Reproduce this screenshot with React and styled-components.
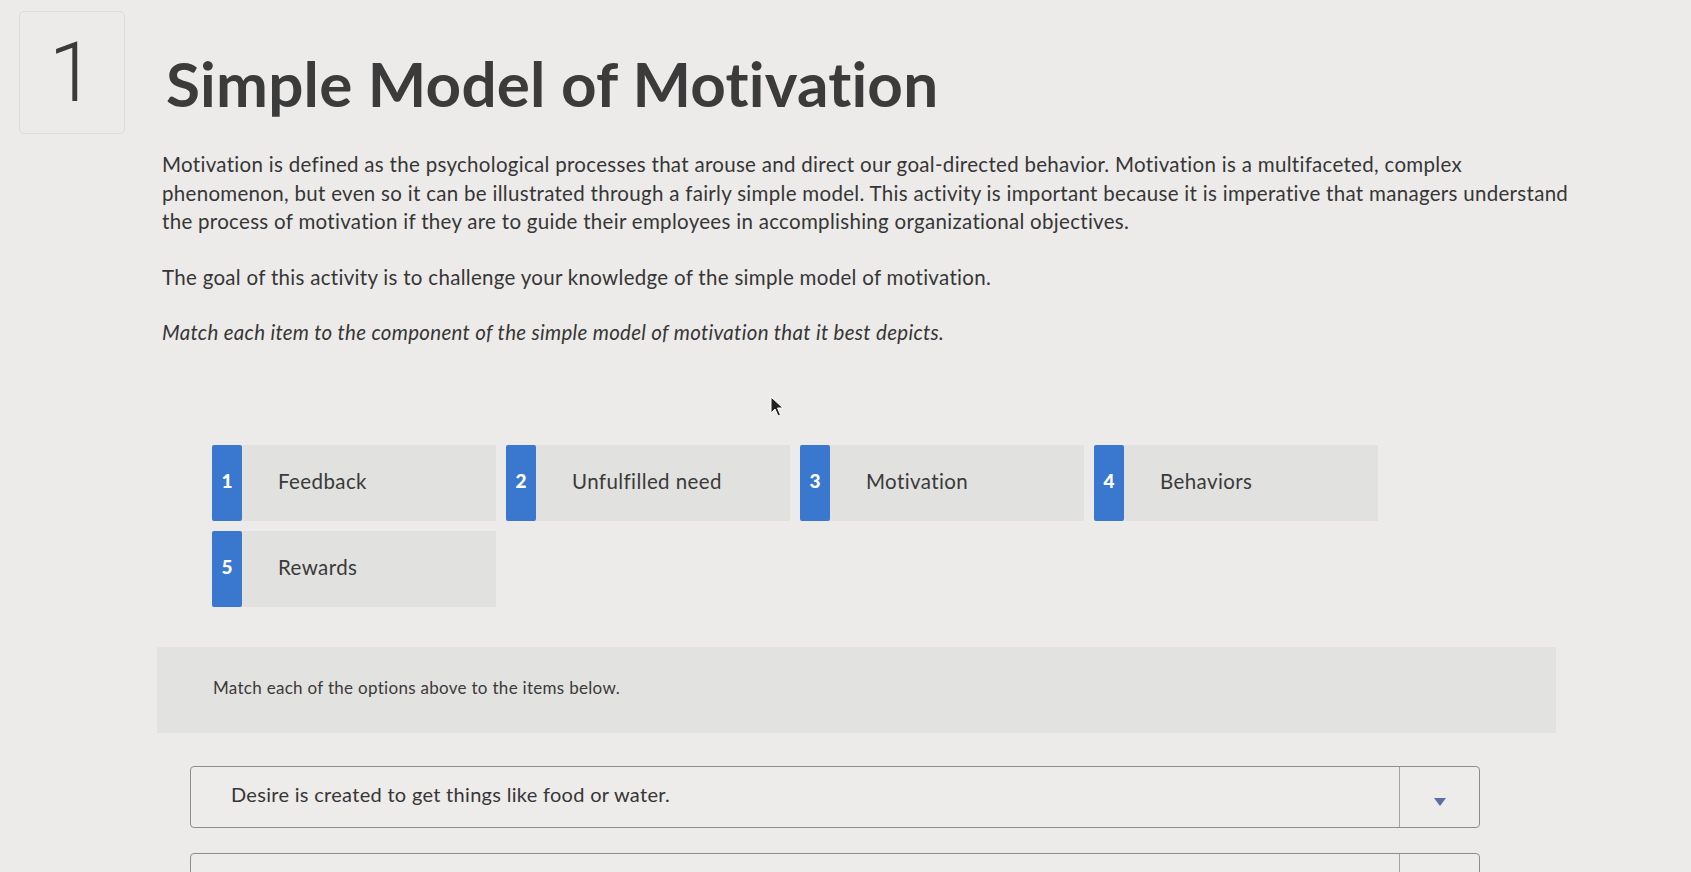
import React from "react";
import styled, { createGlobalStyle } from "styled-components";

const Global = createGlobalStyle`
  html, body { margin: 0; padding: 0; background: #ecebe9; }
  body { font-family: Lato, "Open Sans", "Liberation Sans", sans-serif; color: #333; }
`;

const Page = styled.div`
  position: relative;
  width: 1691px;
  height: 872px;
  overflow: hidden;
  background: #ecebe9;
`;

const Header = styled.header`
  display: flex;
  align-items: center;
  padding: 11px 0 0 19px;
`;

const NumberBox = styled.div`
  width: 106px;
  height: 123px;
  box-sizing: border-box;
  border: 1px solid #dcdcda;
  border-radius: 5px;
  display: flex;
  align-items: center;
  justify-content: center;
  font-family: Roboto, Lato, sans-serif;
  font-size: 84px;
  font-weight: 300;
  color: #3a3a3a;
  line-height: 1;
`;

const Title = styled.h1`
  margin: 20px 0 0 41px;
  font-size: 62px;
  font-weight: 700;
  color: #3b3b3b;
  letter-spacing: 0.2px;
`;

const Body = styled.main`
  padding: 16px 0 0 162px;
`;

const Para = styled.p`
  margin: 0 0 27px;
  width: 1420px;
  font-size: 20.5px;
  letter-spacing: 0.3px;
  line-height: 28.5px;
  color: #363636;
  white-space: nowrap;
  font-style: ${(p) => (p.$italic ? "italic" : "normal")};
`;

const Tiles = styled.div`
  display: grid;
  grid-template-columns: repeat(4, 284px);
  gap: 10px;
  margin: 98px 0 0 50px;
`;

const Tile = styled.div`
  display: flex;
  align-items: center;
  height: 76px;
  background: #e1e1df;
`;

const Badge = styled.div`
  align-self: stretch;
  width: 30px;
  background: #3a78cf;
  border-radius: 2px;
  color: #fff;
  font-weight: 900;
  font-size: 19px;
  display: flex;
  align-items: center;
  justify-content: center;
  padding-bottom: 4px;
`;

const TileLabel = styled.span`
  margin-left: 36px;
  margin-bottom: 4px;
  font-size: 20.5px;
  letter-spacing: 0.4px;
  color: #3a3a3a;
`;

const Section = styled.section`
  margin: 40px 0 0 -5px;
  width: 1399px;
`;

const Prompt = styled.div`
  background: #e2e2e0;
  height: 86px;
  padding: 0 0 4px 56px;
  box-sizing: border-box;
  display: flex;
  align-items: center;
  font-size: 17px;
  letter-spacing: 0.3px;
  color: #3a3a3a;
`;

const Items = styled.div`
  padding: 33px 0 0 33px;
  display: flex;
  flex-direction: column;
  gap: 25px;
`;

const Select = styled.div`
  width: 1290px;
  height: 62px;
  box-sizing: border-box;
  border: 1.5px solid #8d8d8b;
  border-radius: 4px;
  display: flex;
  background: #edecea;
`;

const SelectText = styled.div`
  flex: 1;
  padding: 15px 0 0 40px;
  font-size: 20px;
  letter-spacing: 0.3px;
  color: #363636;
`;

const SelectArrow = styled.div`
  width: 80px;
  border-left: 1.5px solid #a3a3a1;
  display: flex;
  align-items: center;
  justify-content: center;
  padding-top: 10px;
  box-sizing: border-box;
`;

const Cursor = styled.svg`
  position: absolute;
  left: 770px;
  top: 396px;
`;

const options = ["Feedback", "Unfulfilled need", "Motivation", "Behaviors", "Rewards"];

export default function App() {
  return (
    <Page>
      <Global />
      <Header>
        <NumberBox>1</NumberBox>
        <Title>Simple Model of Motivation</Title>
      </Header>
      <Body>
        <Para>
          Motivation is defined as the psychological processes that arouse and direct our goal-directed behavior. Motivation is a multifaceted, complex
          <br />
          phenomenon, but even so it can be illustrated through a fairly simple model. This activity is important because it is imperative that managers understand
          <br />
          the process of motivation if they are to guide their employees in accomplishing organizational objectives.
        </Para>
        <Para>The goal of this activity is to challenge your knowledge of the simple model of motivation.</Para>
        <Para $italic>Match each item to the component of the simple model of motivation that it best depicts.</Para>

        <Tiles>
          {options.map((label, i) => (
            <Tile key={label}>
              <Badge>{i + 1}</Badge>
              <TileLabel>{label}</TileLabel>
            </Tile>
          ))}
        </Tiles>

        <Section>
          <Prompt>Match each of the options above to the items below.</Prompt>
          <Items>
            <Select>
              <SelectText>Desire is created to get things like food or water.</SelectText>
              <SelectArrow>
                <svg width="12" height="8" viewBox="0 0 12 8">
                  <path d="M0 0 H12 L6 8 Z" fill="#5b6ea6" />
                </svg>
              </SelectArrow>
            </Select>
            <Select>
              <SelectText />
              <SelectArrow />
            </Select>
          </Items>
        </Section>
      </Body>
      <Cursor width="14" height="22" viewBox="0 0 14 22">
        <path d="M1 1 L1 17 L5 13 L8 20 L10.5 19 L7.5 12 L13 12 Z" fill="#222" stroke="#fff" strokeWidth="1" />
      </Cursor>
    </Page>
  );
}
